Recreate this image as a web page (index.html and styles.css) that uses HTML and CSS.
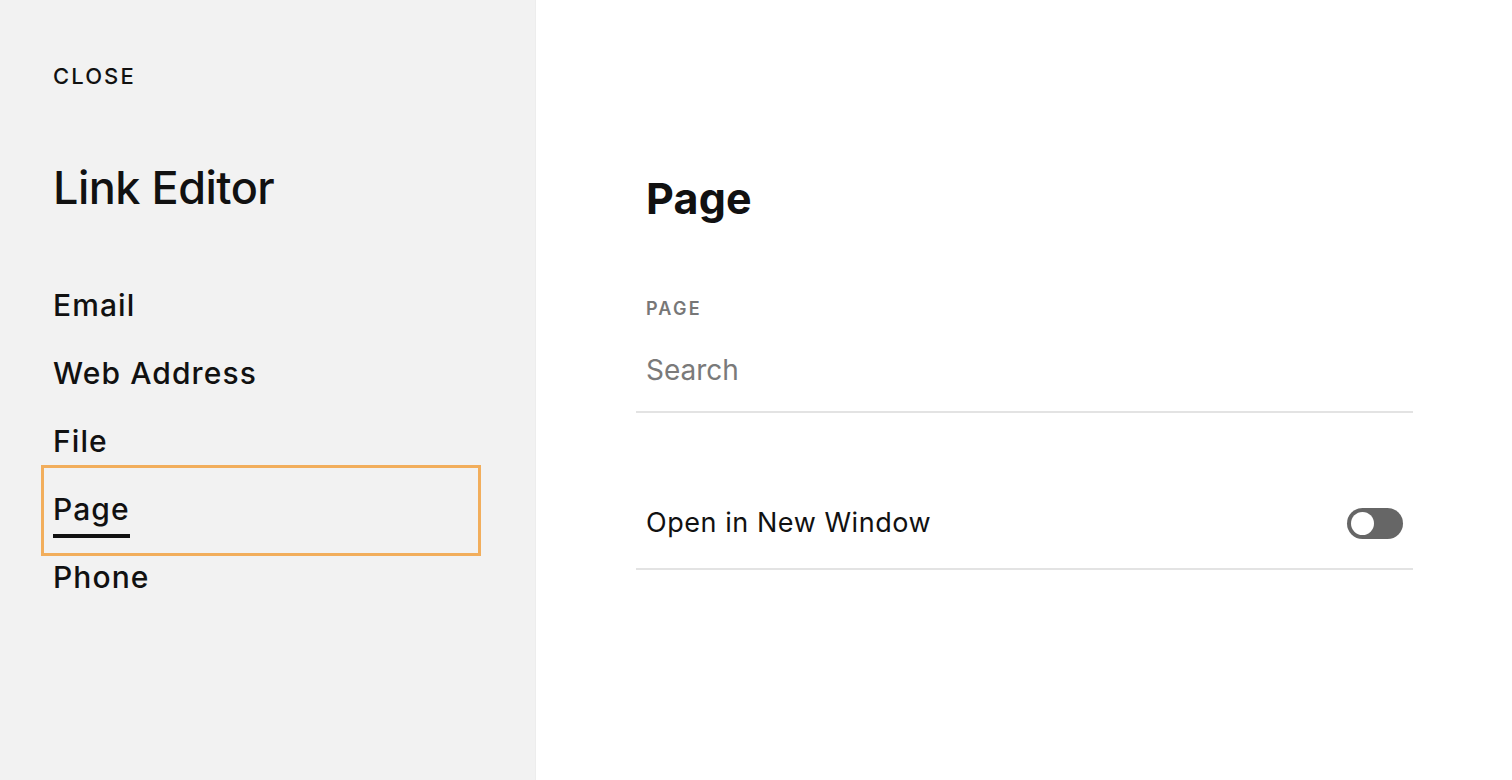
FILE: index.html
```html
<!DOCTYPE html>
<html lang="en">
<head>
<meta charset="utf-8">
<title>Link Editor</title>
<link rel="stylesheet" href="styles.css">
</head>
<body>
<div class="app">
  <aside class="sidebar">
    <div class="close">CLOSE</div>
    <h1 class="title">Link Editor</h1>
    <nav class="menu">
      <div class="item">Email</div>
      <div class="item">Web Address</div>
      <div class="item">File</div>
      <div class="item active"><span class="active-label">Page</span></div>
      <div class="item">Phone</div>
    </nav>
  </aside>
  <main class="content">
    <h2 class="heading">Page</h2>
    <div class="field">
      <div class="label">PAGE</div>
      <div class="search">Search</div>
    </div>
    <div class="row">
      <span class="row-text">Open in New Window</span>
      <span class="toggle"><span class="knob"></span></span>
    </div>
  </main>
</div>
</body>
</html>
```
FILE: styles.css
```css
*, *::before, *::after { box-sizing: border-box; }
html, body { margin: 0; padding: 0; }
body {
  font-family: Inter, "Liberation Sans", sans-serif;
  color: #111;
  background: #fff;
}
.app {
  display: flex;
  height: 780px;
}
.sidebar {
  width: 536px;
  flex: none;
  background: #f2f2f2;
  border-right: 1px solid #ededed;
  padding: 63px 0 0 53px;
}
.close {
  font-size: 22px;
  font-weight: 500;
  letter-spacing: 2.1px;
  line-height: 26px;
}
.title {
  margin: 73px 0 0;
  font-size: 45px;
  font-weight: 500;
  line-height: 52px;
  letter-spacing: -0.5px;
}
.menu {
  margin-top: 73px;
  display: flex;
  flex-direction: column;
}
.item {
  font-size: 30px;
  font-weight: 500;
  line-height: 36px;
  height: 68px;
  letter-spacing: 1.1px;
}
.item.active {
  position: relative;
}
.item.active::before {
  content: "";
  position: absolute;
  left: -12px;
  top: -26px;
  width: 440px;
  height: 91px;
  border: 3px solid #f2ae5c;
}
.active-label {
  display: inline-block;
  border-bottom: 4px solid #111;
  line-height: 36px;
  padding-bottom: 7px;
}
.content {
  flex: 1;
  padding: 172px 99px 0 100px;
}
.heading {
  margin: 0 0 0 10px;
  font-size: 43px;
  font-weight: 700;
  line-height: 52px;
  letter-spacing: 0.2px;
}
.field {
  margin-top: 74px;
  border-bottom: 2px solid #e3e3e3;
  padding: 0 0 24px 10px;
}
.label {
  font-size: 18px;
  font-weight: 600;
  color: #777;
  letter-spacing: 2.2px;
  line-height: 22px;
}
.search {
  margin-top: 33px;
  font-size: 28px;
  color: #7a7a7a;
  line-height: 34px;
}
.row {
  margin-top: 93px;
  display: flex;
  align-items: center;
  justify-content: space-between;
  padding: 0 10px 28px 10px;
  border-bottom: 2px solid #e3e3e3;
}
.row-text {
  font-size: 27px;
  line-height: 34px;
  letter-spacing: 0.55px;
}
.toggle {
  width: 56px;
  height: 31px;
  border-radius: 16px;
  background: #666;
  display: flex;
  align-items: center;
  padding-left: 4px;
}
.knob {
  width: 23px;
  height: 23px;
  border-radius: 50%;
  background: #fff;
}
```
